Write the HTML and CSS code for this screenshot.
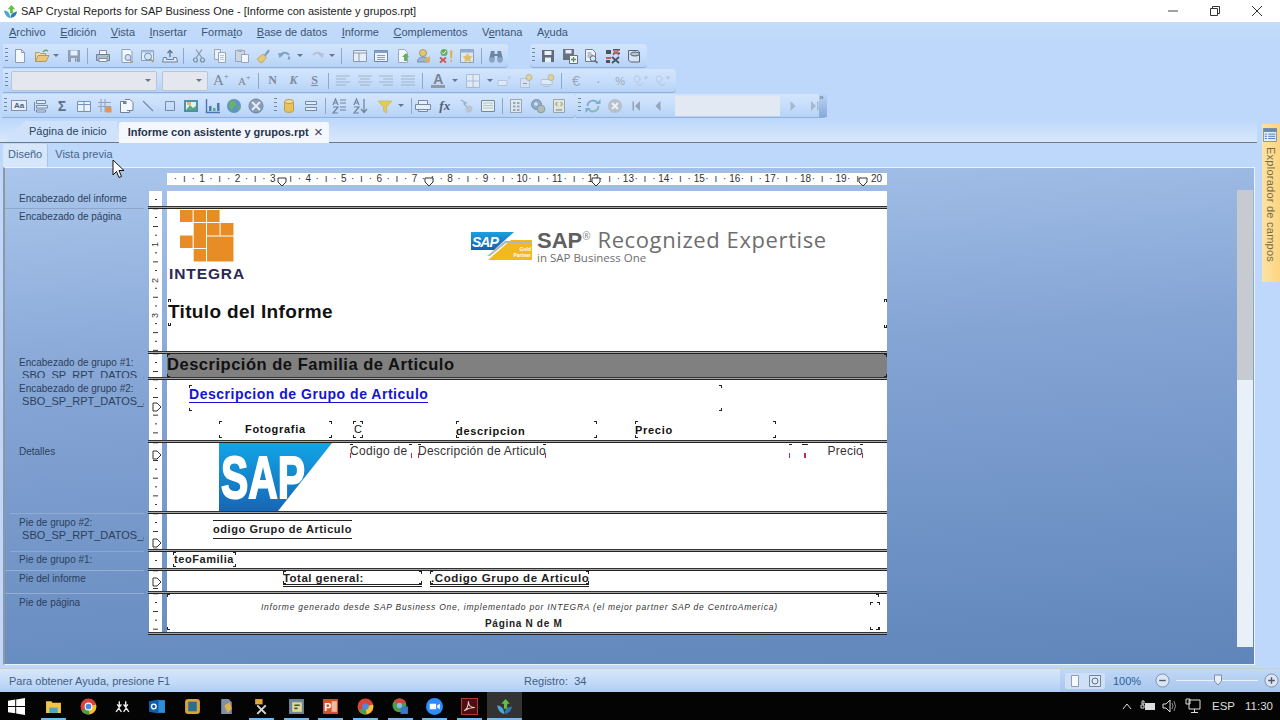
FILE: index.html
```html
<!DOCTYPE html>
<html>
<head>
    <title>SAP Crystal Reports for SAP Business One</title>
    <link rel="stylesheet" href="styles.css">
</head>
<body>
    <!-- icon set, all toolbar icons are drawn on a 16 box -->
    <svg class="defs" width="0" height="0">
        <symbol id="new" viewBox="0 0 16 16"><path d="M3.5 1.5h6l3 3v10h-9z" fill="#fff" stroke="#7f8fa8"/><path d="M9.5 1.5v3h3" fill="none" stroke="#7f8fa8"/></symbol>
        <symbol id="open" viewBox="0 0 16 16"><path d="M1.5 13.5v-9h4l1 1h5v2" fill="#f7dc96" stroke="#a98a45"/><path d="M1.5 13.5l2.5-6h11l-3 6z" fill="#f3c35a" stroke="#a98a45"/><path d="M9 4q2-3 5-1" fill="none" stroke="#5b8a3c" stroke-width="1.3"/></symbol>
        <symbol id="save" viewBox="0 0 16 16"><path d="M2 2h12v12H2z" fill="#7f8fa8"/><path d="M4.5 2.5h7v5h-7z" fill="#eef3fa"/><path d="M5 10h6v4H5z" fill="#d5dde9"/><path d="M9 10.5h1.500v3H9z" fill="#6b7a92"/></symbol>
        <symbol id="print" viewBox="0 0 16 16"><path d="M4.500 2.500h7v4h-7z" fill="#fff" stroke="#6f7c90"/><path d="M1.500 6.500h13v6h-13z" fill="#aab4c2" stroke="#5f6b7d"/><path d="M4 10.500h8v3H4z" fill="#fff" stroke="#6f7c90"/><path d="M11.500 8h2v1.500h-2z" fill="#6fae4f"/></symbol>
        <symbol id="pview" viewBox="0 0 16 16"><path d="M3 1.500h8l2 2v11H3z" fill="#fff" stroke="#7f8fa8"/><circle cx="9" cy="9.500" r="3" fill="#cfe3f7" stroke="#5f7b98"/><path d="M11 12l2.500 2.500" stroke="#b08a3a" stroke-width="1.500"/></symbol>
        <symbol id="pview2" viewBox="0 0 16 16"><path d="M1.500 2.500h12v10h-12z" fill="#eaf1fa" stroke="#7f8fa8"/><path d="M1.500 2.500h12v2h-12z" fill="#9db6d6"/><circle cx="8" cy="8.500" r="3.500" fill="#d6e8f9" stroke="#5f7b98"/><path d="M10.500 11l3 3" stroke="#b08a3a" stroke-width="1.500"/></symbol>
        <symbol id="export" viewBox="0 0 16 16"><path d="M1.500 9.500h3v2h7v-2h3l1 4.500h-15z" fill="#e6ebf2" stroke="#5f6b7d"/><path d="M8 9V3M5.500 5L8 2.500 10.500 5" fill="none" stroke="#4d5969" stroke-width="1.300"/></symbol>
        <symbol id="cut" viewBox="0 0 16 16"><path d="M5 10L11 1.500M11 10L5 1.500" stroke="#7a8492" stroke-width="1.200"/><circle cx="4.500" cy="12" r="2" fill="none" stroke="#6f7c90" stroke-width="1.200"/><circle cx="11.500" cy="12" r="2" fill="none" stroke="#6f7c90" stroke-width="1.200"/></symbol>
        <symbol id="copy" viewBox="0 0 16 16"><path d="M2.500 1.500h6v10h-6z" fill="#f4f6f9" stroke="#8e99a8"/><path d="M6.500 4.500h7v10h-7z" fill="#fff" stroke="#8e99a8"/><path d="M8 7.500h4M8 9.500h4M8 11.500h4" stroke="#b6bfcb"/></symbol>
        <symbol id="paste" viewBox="0 0 16 16"><path d="M1.500 2.500h9v11h-9z" fill="#cfd5dd" stroke="#8e99a8"/><path d="M4 1.500h4v2.500H4z" fill="#9aa5b3"/><path d="M7.500 6.500h7v8h-7z" fill="#fff" stroke="#8e99a8"/></symbol>
        <symbol id="brush" viewBox="0 0 16 16"><path d="M9 7l4-5.500 2 1.500-4.500 5.500z" fill="#6d8fb8"/><path d="M2 11l6-5 3.500 3.500-4.500 5.500C5 14 3 13 2 11z" fill="#efc456" stroke="#a98a45" stroke-width=".7"/></symbol>
        <symbol id="undo" viewBox="0 0 16 16"><path d="M3 8.500a5 5 0 0 1 9-1.500M12.500 8.500l-1 3" fill="none" stroke="#6f8fb8" stroke-width="2"/><path d="M1 5l6 1-4.500 4z" fill="#6f8fb8"/></symbol>
        <symbol id="redo" viewBox="0 0 16 16"><path d="M13 8.500a5 5 0 0 0-9-1.500" fill="none" stroke="#aebccd" stroke-width="2"/><path d="M15 5l-6 1 4.500 4z" fill="#aebccd"/></symbol>
        <symbol id="layout" viewBox="0 0 16 16"><path d="M1.500 2.500h13v11h-13z" fill="#eef3f9" stroke="#7f8b9b"/><path d="M1.500 5h13M7 5v8.500" stroke="#7f8b9b"/></symbol>
        <symbol id="form" viewBox="0 0 16 16"><path d="M1.500 2.500h13v11h-13z" fill="#f7fafd" stroke="#5f6f85"/><path d="M1.500 2.500h13v2.500h-13z" fill="#6f92bd"/><path d="M4 7.500h8M4 9.500h8M4 11.500h8" stroke="#7f8b9b"/></symbol>
        <symbol id="pgreen" viewBox="0 0 16 16"><path d="M3.500 1.500h6l3 3v10h-9z" fill="#fff" stroke="#8f9bab"/><path d="M7 9l4-4 3 4h-2v4H9V9z" fill="#4fa33a"/></symbol>
        <symbol id="people" viewBox="0 0 16 16"><circle cx="7" cy="5" r="3.500" fill="#e9c24f" stroke="#9a8a4a"/><path d="M1.500 14c0-4 3-5 6-5s5 2 5 5z" fill="#8fb0c9" stroke="#6f7c90"/><path d="M9 11l5-3v6h-5z" fill="#e3a33a"/></symbol>
        <symbol id="check" viewBox="0 0 16 16"><circle cx="6" cy="4.500" r="3.500" fill="#4fa33a"/><path d="M4 4.500l1.500 1.500 2.500-3" stroke="#fff" fill="none"/><path d="M2 9.500l6 5M8 9.500l-6 5" stroke="#cf3a2a" stroke-width="1.800"/><path d="M12 2.500h2.500l-.5 8h-1.500zM12.500 12h1.500v2h-1.500z" fill="#e8a21f"/></symbol>
        <symbol id="note" viewBox="0 0 16 16"><path d="M1.500 1.500h13v13h-13z" fill="#dfe9f5" stroke="#7f93ac"/><path d="M1.500 1.500h13v3h-13z" fill="#88a4c6"/><path d="M8.500 5l1.800 3 3.200.5-2.300 2.300.6 3.200-3.300-1.500-3 1.500.5-3.200L3.500 8.500 7 8z" fill="#eeb63a"/></symbol>
        <symbol id="binoc" viewBox="0 0 16 16"><path d="M3 3h3.500v3h3V3H13l2 9h-5.500V8h-3v4H1z" fill="#56708f"/><circle cx="4" cy="12" r="2.800" fill="#7d99ba"/><circle cx="12" cy="12" r="2.800" fill="#7d99ba"/></symbol>
        <symbol id="disk" viewBox="0 0 16 16"><path d="M2 2h12v12H2z" fill="#4a4f57"/><path d="M4.500 3h7v4h-7z" fill="#f3f5f8"/><path d="M5 9.500h6V14H5z" fill="#f3f5f8"/></symbol>
        <symbol id="diskplus" viewBox="0 0 16 16"><path d="M1 1h11v11H1z" fill="#525861"/><path d="M3.500 2h6v3.500h-6z" fill="#f3f5f8"/><path d="M7.500 7.500h8v8h-8z" fill="#fff" stroke="#525861"/><path d="M11.500 9v5M9 11.500h5" stroke="#3f7c3a" stroke-width="1.300"/></symbol>
        <symbol id="docmag" viewBox="0 0 16 16"><path d="M2.500 1.500h7l3 3v9h-10z" fill="#f7f8fa" stroke="#5f6670"/><path d="M4.500 5h4M4.500 7h5M4.500 9h3" stroke="#7b838e"/><circle cx="10" cy="10.500" r="2.800" fill="#dfeaf6" stroke="#434a54"/><path d="M12 12.500l2.500 2.500" stroke="#434a54" stroke-width="1.500"/></symbol>
        <symbol id="abc" viewBox="0 0 16 16"><path d="M1 2h5v4H1z" fill="#2b3240"/><path d="M8 1h7v1.500H8zM8 4.500h7V6H8z" fill="#2b3240"/><path d="M8 2l6 5M14 2l-6 5" stroke="#cf3a2a" stroke-width="1.400"/><path d="M7 9l7 6M14 9l-7 6" stroke="#2b3240" stroke-width="1.800"/><path d="M1 9h5v2H1z" fill="#cf3a2a"/><path d="M1 12h4v3H1z" fill="#2b3240"/></symbol>
        <symbol id="cyl" viewBox="0 0 16 16"><path d="M2.500 2.500h9l2 1.500v10h-9l-2-2z" fill="#dfe6ef" stroke="#3f4854"/><ellipse cx="9" cy="6" rx="4.500" ry="2" fill="#aebdcf" stroke="#3f4854"/></symbol>
        <symbol id="lines" viewBox="0 0 16 16"><path d="M3.500 2.500h9v3h-9zM3.500 7.500h11v2.500h-11zM3.500 12h9v2h-9z" fill="#eaf1fa" stroke="#63758c"/><path d="M1.500 4v9" stroke="#63758c"/></symbol>
        <symbol id="table" viewBox="0 0 16 16"><path d="M1.500 3.500h13v10h-13z" fill="#f3f7fc" stroke="#5f81aa"/><path d="M1.500 6.500h13M8 3.500v10" stroke="#5f81aa"/></symbol>
        <symbol id="cross" viewBox="0 0 16 16"><path d="M4 1v13M8 1v13M1 4.500h13M1 8.500h13" stroke="#8694a7"/><path d="M8.500 9h6v5.500h-6z" fill="#e8852e"/></symbol>
        <symbol id="sub" viewBox="0 0 16 16"><path d="M1.500 3.500h9v11h-9z" fill="#fff" stroke="#5f6b7d"/><path d="M6 1.500h5l3 3v8H8" fill="#fff" stroke="#5f6b7d"/><path d="M4 3h3.500v3H4z" fill="#5f6b7d"/></symbol>
        <symbol id="line" viewBox="0 0 16 16"><path d="M3 3l10 10" stroke="#68778b" stroke-width="1.200"/></symbol>
        <symbol id="box" viewBox="0 0 16 16"><path d="M3.500 3.500h9v9h-9z" fill="none" stroke="#68778b"/></symbol>
        <symbol id="pic" viewBox="0 0 16 16"><path d="M1 2h14v12H1z" fill="#2f7f93"/><path d="M3 4h10v8H3z" fill="#eaf6f8"/><path d="M3 12l4-5 3 3 3-2v4z" fill="#3f9f5f"/><path d="M4 4h4v3H4z" fill="#e8b23a"/></symbol>
        <symbol id="chart" viewBox="0 0 16 16"><path d="M1.500 1v13.500H15" fill="none" stroke="#2f5f9f" stroke-width="1.400"/><path d="M4 8h2.500v5H4z" fill="#2f5f9f"/><path d="M8 10h2.500v3H8z" fill="#3f9f5f"/><path d="M12 5h2.500v8H12z" fill="#2f5f9f"/></symbol>
        <symbol id="globe" viewBox="0 0 16 16"><circle cx="8" cy="8" r="7" fill="#3f85b8"/><path d="M4 2.500l5 1 1 4-3 2-1 4-3-5zM11 8l3 .5-1.500 4.500z" fill="#56a63f"/></symbol>
        <symbol id="ballx" viewBox="0 0 16 16"><circle cx="8" cy="8" r="7" fill="#7b8ea6" stroke="#5d7088"/><path d="M4 4l8 8M12 4l-8 8" stroke="#e9eff6" stroke-width="2.200"/></symbol>
        <symbol id="db" viewBox="0 0 16 16"><path d="M3.500 3.500v9c0 2.500 9 2.500 9 0v-9z" fill="#f0bd36" stroke="#b98b1f"/><ellipse cx="8" cy="3.500" rx="4.500" ry="2" fill="#f8dc80" stroke="#b98b1f"/></symbol>
        <symbol id="sect" viewBox="0 0 16 16"><path d="M2.500 3.500h11v3h-11zM2.500 9.500h11v3h-11z" fill="#eaf1fa" stroke="#63758c"/></symbol>
        <symbol id="sortaz" viewBox="0 0 16 16"><path d="M2 7l2.500-6L7 7M3 5h3M2 9h5l-5 6h5" fill="none" stroke="#5d7088" stroke-width="1.200"/><path d="M9 2h6M9 5h6M9 9h6M9 12h6" stroke="#5d7088"/></symbol>
        <symbol id="sortd" viewBox="0 0 16 16"><path d="M1 7l2.500-6L6 7M2 5h3M1 9h5l-5 6h5" fill="none" stroke="#5d7088" stroke-width="1.200"/><path d="M11 1v13M8 11l3 3.500 3-3.500" fill="none" stroke="#5d7088" stroke-width="1.300"/></symbol>
        <symbol id="funnel" viewBox="0 0 16 16"><path d="M1 3h14L9.500 9v6l-3-2V9z" fill="#ecc62f" stroke="#c9a422" stroke-width=".6"/></symbol>
        <symbol id="tray" viewBox="0 0 16 16"><path d="M3.500 2.500h9v4h-9zM.5 6.500h15v5h-15zM3.500 11.500h9v2h-9z" fill="#edf2f8" stroke="#63758c"/></symbol>
        <symbol id="ball" viewBox="0 0 16 16"><path d="M3 2l5 3-2 1 3 3" fill="none" stroke="#8f9fb2" stroke-width="1.300"/><circle cx="11" cy="11" r="3.500" fill="#b9bfc7"/></symbol>
        <symbol id="dots" viewBox="0 0 16 16"><path d="M1.500 2.500h13v11h-13z" fill="#eef4e8" stroke="#63758c"/><path d="M3.500 5h9M3.500 7.500h9M3.500 10h9" stroke="#6f8a9f" stroke-dasharray="1 1"/></symbol>
        <symbol id="tbl2" viewBox="0 0 16 16"><path d="M2.500 1.500h11v13h-11z" fill="#e8eaee" stroke="#8e98a5"/><path d="M5 4h2.500v2H5zM9 4h2.500v2H9zM5 7.500h2.500v2H5zM9 7.500h2.500v2H9zM5 11h2.500v2H5zM9 11h2.500v2H9z" fill="#8e98a5"/></symbol>
        <symbol id="gears" viewBox="0 0 16 16"><circle cx="6.500" cy="6.500" r="5" fill="#7fa1c5" stroke="#6b7f96"/><circle cx="11" cy="11" r="3.800" fill="#a9b7a8" stroke="#7d8a7c"/><circle cx="6" cy="6" r="1.800" fill="#dfe9f3"/></symbol>
        <symbol id="code" viewBox="0 0 16 16"><path d="M2.500 1.500h11v13h-11z" fill="#e7e9c8" stroke="#8e98a5"/><path d="M6.500 4L4.500 6l2 2M9.500 4l2 2-2 2" fill="none" stroke="#5d7088"/><path d="M5 11h6v2H5z" fill="#9aa6b4"/></symbol>
        <symbol id="refresh" viewBox="0 0 16 16"><path d="M2.500 8a5.500 5.500 0 0 1 10-3" fill="none" stroke="#6fa0c9" stroke-width="2"/><path d="M13.500 8a5.500 5.500 0 0 1-10 3" fill="none" stroke="#7fae9f" stroke-width="2"/><path d="M10.500 6h5V1zM5.500 10h-5v5z" fill="#6fa0c9"/></symbol>
        <symbol id="stop" viewBox="0 0 16 16"><circle cx="8" cy="8" r="7" fill="#b3b8be"/><path d="M5 5l6 6M11 5l-6 6" stroke="#f4f6f8" stroke-width="2.200"/></symbol>
        <symbol id="first" viewBox="0 0 16 16"><path d="M4.500 3.500h1.500v9H4.500zM12 3v10L7 8z" fill="#8a96a6"/></symbol>
        <symbol id="prev" viewBox="0 0 16 16"><path d="M10.500 3v10L5.500 8z" fill="#8a96a6"/></symbol>
        <symbol id="next" viewBox="0 0 16 16"><path d="M5.500 3v10l5-5z" fill="#9fb0c6"/></symbol>
        <symbol id="last" viewBox="0 0 16 16"><path d="M4 3v10l5-5zM10 3.500h1.500v9H10z" fill="#9fb0c6"/></symbol>
        <symbol id="al" viewBox="0 0 16 16"><path d="M1 3h14M1 6h10M1 9h14M1 12h10" stroke="#8d99a8" stroke-width="1.200"/></symbol>
        <symbol id="ac" viewBox="0 0 16 16"><path d="M1 3h14M3 6h10M1 9h14M3 12h10" stroke="#8d99a8" stroke-width="1.200"/></symbol>
        <symbol id="ar" viewBox="0 0 16 16"><path d="M1 3h14M5 6h10M1 9h14M5 12h10" stroke="#8d99a8" stroke-width="1.200"/></symbol>
        <symbol id="aj" viewBox="0 0 16 16"><path d="M1 3h14M1 6h14M1 9h14M1 12h14" stroke="#8d99a8" stroke-width="1.200"/></symbol>
        <symbol id="border" viewBox="0 0 16 16"><path d="M1.500 1.500h13v13h-13zM8 1.500v13M1.500 8h13" fill="#eef3f9" stroke="#9aa6b5"/></symbol>
        <symbol id="cellb" viewBox="0 0 16 16"><path d="M1 7.500h9v5H1z" fill="#eef3f9" stroke="#aab5c3"/><path d="M11 6l3-3M14 6l-3-3" stroke="#aab5c3"/></symbol>
        <symbol id="lock1" viewBox="0 0 16 16"><path d="M2.500 5.500h9v9h-9z" fill="#dfe6ef" stroke="#a8b3c1"/><path d="M5 10h4v1H5z" fill="#777"/><circle cx="11" cy="4.500" r="3" fill="#eec866" stroke="#b59a55"/></symbol>
        <symbol id="lock2" viewBox="0 0 16 16"><path d="M1 6.500h11v5H1zM3 13.500h7" fill="#eef3f9" stroke="#a8b3c1"/><circle cx="11" cy="4.500" r="3" fill="#eec866" stroke="#b59a55"/></symbol>
        <symbol id="pct1" viewBox="0 0 16 16"><path d="M3 3a3 3 0 1 0 .1 0M12 2.500v4M10 4.500h4" fill="none" stroke="#aab5c3"/><path d="M3 10l3 3 3-3" fill="none" stroke="#aab5c3"/></symbol>
        <symbol id="fields" viewBox="0 0 16 16"><path d="M.5 .5h15v15H.5z" fill="#e4eef9" stroke="#6a89ad"/><path d="M.5 .5h15v4H.5z" fill="#6a89ad"/><path d="M6 7h8M6 9.500h8M6 12h8" stroke="#3b74b5"/><path d="M2 7h2.500M2 9.500h2.500M2 12h2.500" stroke="#3b74b5"/></symbol>
        <symbol id="app" viewBox="0 0 16 16"><path d="M1 7c3 0 5 1.500 6 4l1 4c-4-.5-6-4-7-8z" fill="#4aa5d8"/><path d="M8 15c0-4 2-6 7-7-.5 4-3 6.500-7 7z" fill="#2f78b8"/><path d="M9 1l4 4.500h-2.500V10H7.500V5.500H5z" fill="#5fc13f"/></symbol>
        <symbol id="dn-chev" viewBox="0 0 10 8"><path d="M1 7l4-5 4 5" fill="none" stroke="#ddd"/></symbol>
    </svg>

    <div class="titlebar">
        <svg class="app-ic"><use href="#app"/></svg>
        <span class="app-title">SAP Crystal Reports for SAP Business One - [Informe con asistente y grupos.rpt]</span>
        <div class="win-btns">
            <svg class="win-b" viewBox="0 0 12 12"><path d="M1 6h10" stroke="#444"/></svg>
            <svg class="win-b" viewBox="0 0 12 12"><path d="M1.500 3.500h7v7h-7zM3.500 3.500v-2h7v7h-2" fill="none" stroke="#333"/></svg>
            <svg class="win-b" viewBox="0 0 12 12"><path d="M1 1l10 10M11 1L1 11" stroke="#333"/></svg>
        </div>
    </div>

    <nav class="menubar">
        <span><u>A</u>rchivo</span><span><u>E</u>dición</span><span><u>V</u>ista</span><span><u>I</u>nsertar</span><span>Forma<u>t</u>o</span><span><u>B</u>ase de datos</span><span><u>I</u>nforme</span><span><u>C</u>omplementos</span><span>V<u>e</u>ntana</span><span>A<u>y</u>uda</span>
    </nav>

    <div class="toolbars">
        <div class="tb-row">
            <div class="tb tb-1">
                <i class="grip"></i>
                <svg class="ic"><use href="#new"/></svg>
                <svg class="ic"><use href="#open"/></svg><b class="dd"></b>
                <svg class="ic"><use href="#save"/></svg><i class="sep"></i>
                <svg class="ic"><use href="#print"/></svg>
                <svg class="ic ic-w"><use href="#pview"/></svg>
                <svg class="ic"><use href="#pview2"/></svg>
                <svg class="ic"><use href="#export"/></svg><i class="sep"></i>
                <svg class="ic"><use href="#cut"/></svg>
                <svg class="ic"><use href="#copy"/></svg>
                <svg class="ic"><use href="#paste"/></svg>
                <svg class="ic"><use href="#brush"/></svg>
                <svg class="ic"><use href="#undo"/></svg><b class="dd"></b>
                <svg class="ic"><use href="#redo"/></svg><b class="dd"></b><i class="sep sep-w"></i>
                <svg class="ic"><use href="#layout"/></svg>
                <svg class="ic"><use href="#form"/></svg>
                <svg class="ic"><use href="#pgreen"/></svg>
                <svg class="ic"><use href="#people"/></svg>
                <svg class="ic"><use href="#check"/></svg>
                <svg class="ic"><use href="#note"/></svg><i class="sep sep-n"></i>
                <svg class="ic"><use href="#binoc"/></svg>
            </div>
            <div class="tb tb-2">
                <i class="grip"></i>
                <svg class="ic"><use href="#disk"/></svg>
                <svg class="ic"><use href="#diskplus"/></svg>
                <svg class="ic"><use href="#docmag"/></svg>
                <svg class="ic"><use href="#abc"/></svg>
                <svg class="ic"><use href="#cyl"/></svg>
            </div>
        </div>
        <div class="tb-row">
            <div class="tb tb-3">
                <i class="grip"></i>
                <span class="combo combo-font"><b class="dd"></b></span>
                <span class="combo combo-size"><b class="dd"></b></span>
                <span class="tg tg-a">A<sup>+</sup></span>
                <span class="tg tg-a tg-a2">A<sup>+</sup></span><i class="sep sep-n"></i>
                <span class="tg tg-n">N</span><span class="tg tg-k">K</span><span class="tg tg-s">S</span><i class="sep"></i>
                <svg class="ic ic-off"><use href="#al"/></svg>
                <svg class="ic ic-off"><use href="#ac"/></svg>
                <svg class="ic ic-off"><use href="#ar"/></svg>
                <svg class="ic ic-off"><use href="#aj"/></svg><i class="sep sep-n"></i>
                <span class="tg tg-acol"><span>A</span></span><b class="dd"></b>
                <svg class="ic ic-off"><use href="#border"/></svg><b class="dd"></b>
                <svg class="ic ic-off ic-tight"><use href="#cellb"/></svg>
                <svg class="ic ic-off"><use href="#lock1"/></svg>
                <svg class="ic ic-off"><use href="#lock2"/></svg><i class="sep sep-n"></i>
                <span class="tg tg-e">€</span><span class="tg tg-e">·</span><span class="tg tg-p">%</span>
                <svg class="ic ic-off"><use href="#pct1"/></svg>
                <svg class="ic ic-off"><use href="#pct1"/></svg>
            </div>
        </div>
        <div class="tb-row">
            <div class="tb tb-4">
                <i class="grip"></i>
                <span class="tg tg-aa">Aa</span>
                <svg class="ic"><use href="#lines"/></svg>
                <span class="tg tg-sum">Σ</span>
                <svg class="ic"><use href="#table"/></svg>
                <svg class="ic"><use href="#cross"/></svg>
                <svg class="ic"><use href="#sub"/></svg>
                <svg class="ic"><use href="#line"/></svg>
                <svg class="ic"><use href="#box"/></svg>
                <svg class="ic"><use href="#pic"/></svg>
                <svg class="ic"><use href="#chart"/></svg>
                <svg class="ic"><use href="#globe"/></svg>
                <svg class="ic"><use href="#ballx"/></svg>
                <i class="grip grip-m"></i>
                <svg class="ic"><use href="#db"/></svg>
                <svg class="ic"><use href="#sect"/></svg><i class="sep sep-n"></i>
                <svg class="ic"><use href="#sortaz"/></svg>
                <svg class="ic"><use href="#sortd"/></svg>
                <svg class="ic ic-w"><use href="#funnel"/></svg><b class="dd"></b><i class="sep sep-n"></i>
                <svg class="ic ic-tight"><use href="#tray"/></svg>
                <span class="tg tg-fx">fx</span>
                <svg class="ic"><use href="#ball"/></svg>
                <svg class="ic"><use href="#dots"/></svg><i class="sep sep-n"></i>
                <svg class="ic"><use href="#tbl2"/></svg>
                <svg class="ic"><use href="#gears"/></svg>
                <svg class="ic"><use href="#code"/></svg>
            </div>
            <div class="tb tb-5">
                <i class="grip"></i>
                <svg class="ic"><use href="#refresh"/></svg>
                <svg class="ic"><use href="#stop"/></svg>
                <svg class="ic"><use href="#first"/></svg>
                <svg class="ic"><use href="#prev"/></svg>
                <span class="page-box"></span>
                <svg class="ic"><use href="#next"/></svg>
                <svg class="ic"><use href="#last"/></svg>
                <span class="tb-more">»</span>
            </div>
        </div>
    </div>

    <div class="workspace">
        <div class="doc">
            <div class="doc-tabs">
                <span class="doc-tab">Página de inicio</span>
                <span class="doc-tab doc-tab-on">Informe con asistente y grupos.rpt<em>×</em></span>
            </div>
            <div class="view-tabs">
                <span class="view-tab view-tab-on">Diseño</span>
                <span class="view-tab">Vista previa</span>
            </div>
            <div class="panel">
                <div class="report">
                    <div class="hruler">
                        <span><i>·</i><i>ı</i><i>·</i><i>1</i></span><span><i>·</i><i>ı</i><i>·</i><i>2</i></span><span><i>·</i><i>ı</i><i>·</i><i>3</i></span><span><i>·</i><i>ı</i><i>·</i><i>4</i></span><span><i>·</i><i>ı</i><i>·</i><i>5</i></span><span><i>·</i><i>ı</i><i>·</i><i>6</i></span><span><i>·</i><i>ı</i><i>·</i><i>7</i></span><span><i>·</i><i>ı</i><i>·</i><i>8</i></span><span><i>·</i><i>ı</i><i>·</i><i>9</i></span><span><i>·</i><i>ı</i><i>·</i><i>10</i></span><span><i>·</i><i>ı</i><i>·</i><i>11</i></span><span><i>·</i><i>ı</i><i>·</i><i>12</i></span><span><i>·</i><i>ı</i><i>·</i><i>13</i></span><span><i>·</i><i>ı</i><i>·</i><i>14</i></span><span><i>·</i><i>ı</i><i>·</i><i>15</i></span><span><i>·</i><i>ı</i><i>·</i><i>16</i></span><span><i>·</i><i>ı</i><i>·</i><i>17</i></span><span><i>·</i><i>ı</i><i>·</i><i>18</i></span><span><i>·</i><i>ı</i><i>·</i><i>19</i></span><span><i>·</i><i>ı</i><i>·</i><i>20</i></span>
                        <!-- guide markers on the ruler -->
                        <svg class="guide g1" viewBox="0 0 10 10"><path d="M1 1h8v4L5 9 1 5z" fill="#fff" stroke="#333"/></svg>
                        <svg class="guide g2" viewBox="0 0 10 10"><path d="M1 1h8v4L5 9 1 5z" fill="#fff" stroke="#333"/></svg>
                        <svg class="guide g3" viewBox="0 0 10 10"><path d="M1 1h8v4L5 9 1 5z" fill="#fff" stroke="#333"/></svg>
                        <svg class="guide g4" viewBox="0 0 10 10"><path d="M1 1h8v4L5 9 1 5z" fill="#fff" stroke="#333"/></svg>
                    </div>

                    <section class="band">
                        <div class="label label-t2 label-line">Encabezado del informe</div>
                        <div class="paper"><div class="vruler h15"></div><div class="body h15"></div></div>
                    </section>

                    <section class="band">
                        <div class="label label-t2">Encabezado de página</div>
                        <div class="paper">
                            <div class="vruler h142"><span class="vn n1">1</span><span class="vn n2">2</span><span class="vn n3">3</span></div>
                            <div class="body h142">
                                <svg class="tiles" viewBox="0 0 54 52">
                                    <g fill="#e88d26">
                                        <rect x="0" y="0" width="12.600" height="12"/><rect x="13.700" y="0" width="12.300" height="12"/><rect x="27" y="0" width="12.600" height="12"/>
                                        <rect x="0" y="25.500" width="12.600" height="12.500"/><rect x="13.700" y="13" width="12.300" height="25"/>
                                        <rect x="27" y="13" width="12.600" height="12.500"/><rect x="40.600" y="13" width="12.900" height="12.500"/>
                                        <rect x="27" y="26.500" width="26.500" height="25"/><rect x="13.700" y="39" width="12.300" height="12.500"/>
                                    </g>
                                </svg>
                                <span class="integra">INTEGRA</span>
                                <svg class="sap-small" viewBox="0 0 62 30">
                                    <defs><linearGradient id="sb" x1="0" y1="0" x2="0" y2="1"><stop offset="0" stop-color="#19a0e0"/><stop offset="1" stop-color="#155fae"/></linearGradient></defs>
                                    <path d="M17 28L40 8h21v20z" fill="#f1b91e"/>
                                    <path d="M19 24L35 11h26v-2H34L16 24z" fill="#b3b5b8"/>
                                    <path d="M0 0h43L23 18H0z" fill="url(#sb)"/>
                                    <text x="1" y="14.500" class="sap-s">SAP</text>
                                    <text x="60" y="19" class="gold">Gold</text>
                                    <text x="60" y="25" class="gold">Partner</text>
                                </svg>
                                <div class="expertise">
                                    <span class="exp-l1"><b>SAP</b><sup>®</sup> Recognized Expertise</span>
                                    <span class="exp-l2">in SAP Business One</span>
                                </div>
                                <i class="marks m-title"></i>
                                <div class="f f-title">Titulo del Informe</div>
                                <i class="marks m-title-r"></i>
                            </div>
                        </div>
                    </section>

                    <section class="band">
                        <div class="label label-clip">Encabezado de grupo #1:<br><span class="label-2">&nbsp;SBO_SP_RPT_DATOS_AF</span></div>
                        <div class="paper"><div class="vruler h23"></div><div class="body body-gray h23"><div class="f f-fam">Descripción de Familia de Articulo</div><i class="marks m-gray"></i></div></div>
                    </section>

                    <section class="band">
                        <div class="label">Encabezado de grupo #2:<br><span class="label-2">&nbsp;SBO_SP_RPT_DATOS_AF</span></div>
                        <div class="paper">
                            <div class="vruler h60"><svg class="vguide v1" viewBox="0 0 10 10"><path d="M1 1h4l4 4-4 4H1z" fill="#fff" stroke="#333"/></svg></div>
                            <div class="body h60">
                                <div class="f f-grp">Descripcion de Grupo de Articulo</div>
                                <i class="marks m-grp"></i>
                                <div class="f f-h-foto sel">Fotografia</div>
                                <div class="f f-h-c sel">C</div>
                                <div class="f f-h-desc sel">descripcion</div>
                                <div class="f f-h-prec sel">Precio</div>
                            </div>
                        </div>
                    </section>

                    <section class="band">
                        <div class="label label-box">Detalles</div>
                        <div class="paper">
                            <div class="vruler h68"><svg class="vguide v2" viewBox="0 0 10 10"><path d="M1 1h4l4 4-4 4H1z" fill="#fff" stroke="#333"/></svg></div>
                            <div class="body h68">
                                <svg class="sap-big" viewBox="0 0 113 68">
                                    <defs><linearGradient id="sg" x1="0" y1="0" x2="0" y2="1"><stop offset="0" stop-color="#12a5e6"/><stop offset="1" stop-color="#1666b6"/></linearGradient></defs>
                                    <path d="M0 0h113L59 68H0z" fill="url(#sg)"/>
                                    <text x="2" y="55" class="sap-b" textLength="84" lengthAdjust="spacingAndGlyphs">SAP</text>
                                </svg>
                                <div class="f f-d-cod sel-r">Codigo de</div>
                                <div class="f f-d-des sel-r">Descripción de Articulo</div>
                                <i class="marks-r m-d1"></i>
                                <div class="f f-d-pre sel-r">Precio</div>
                            </div>
                        </div>
                    </section>

                    <section class="band">
                        <div class="label label-box">Pie de grupo #2:<br><span class="label-2">&nbsp;SBO_SP_RPT_DATOS_AF</span></div>
                        <div class="paper">
                            <div class="vruler h35"><svg class="vguide v3" viewBox="0 0 10 10"><path d="M1 1h4l4 4-4 4H1z" fill="#fff" stroke="#333"/></svg></div>
                            <div class="body h35"><div class="f f-pg2"><span>Codigo Grupo de Articulo</span></div></div>
                        </div>
                    </section>

                    <section class="band">
                        <div class="label label-t2 label-line2">Pie de grupo #1:</div>
                        <div class="paper"><div class="vruler h16"></div><div class="body h16"><div class="f f-pg1 sel">teoFamilia</div></div></div>
                    </section>

                    <section class="band">
                        <div class="label label-t2 label-line2">Pie del informe</div>
                        <div class="paper">
                            <div class="vruler h20"><svg class="vguide v4" viewBox="0 0 10 10"><path d="M1 1h4l4 4-4 4H1z" fill="#fff" stroke="#333"/></svg></div>
                            <div class="body h20">
                                <div class="f f-tot sel">Total general:</div>
                                <div class="f f-totc sel">.Codigo Grupo de Articulo</div>
                            </div>
                        </div>
                    </section>

                    <section class="band">
                        <div class="label">Pie de página</div>
                        <div class="paper">
                            <div class="vruler h38"></div>
                            <div class="body h38">
                                <i class="marks m-foot"></i>
                                <div class="f f-foot">Informe generado desde SAP Business One, implementado por INTEGRA (el mejor partner SAP de CentroAmerica)</div>
                                <div class="f f-page">Página N de M</div>
                                <i class="marks m-foot2"></i>
                            </div>
                        </div>
                    </section>
                </div>
                <div class="vscroll"><div class="vthumb"></div></div>
            </div>
        </div>
        <aside class="dock">
            <div class="dock-tab">
                <svg class="dock-ic"><use href="#fields"/></svg>
                <span>Explorador de campos</span>
            </div>
        </aside>
    </div>

    <footer class="statusbar">
        <span class="st-help">Para obtener Ayuda, presione F1</span>
        <span class="st-rec">Registro: &nbsp;34</span>
        <div class="st-zoom">
            <span class="st-btns">
                <svg class="st-ic" viewBox="0 0 14 14"><path d="M3.500 1.500h7v11h-7z" fill="#f5f8fc" stroke="#8aa0bb"/></svg>
                <svg class="st-ic" viewBox="0 0 14 14"><path d="M1.500 1.500h11v11h-11z" fill="#dfe9f5" stroke="#6f86a3"/><circle cx="7" cy="7" r="3" fill="none" stroke="#5b6e86"/></svg>
            </span>
            <span class="st-pct">100%</span>
            <svg class="st-round" viewBox="0 0 16 16"><circle cx="8" cy="8" r="7" fill="#dbe6f4" stroke="#7c8fa8"/><path d="M4.500 8h7" stroke="#556" stroke-width="1.500"/></svg>
            <span class="slider"><svg class="slider-thumb" viewBox="0 0 10 12"><path d="M1.500 1h7v6L5 11 1.500 7z" fill="#e9eff7" stroke="#7c8fa8"/></svg></span>
            <svg class="st-round" viewBox="0 0 16 16"><circle cx="8" cy="8" r="7" fill="#dbe6f4" stroke="#7c8fa8"/><path d="M4.500 8h7M8 4.500v7" stroke="#556" stroke-width="1.500"/></svg>
        </div>
    </footer>

    <div class="taskbar">
        <svg class="tk tk-start" viewBox="0 0 16 16"><path d="M0 2.500l6.800-1v6H0zM7.700 1.400L16 0v7.500H7.700zM0 8.400h6.800v6l-6.800-1zM7.700 8.400H16V16l-8.300-1.300z" fill="#fff"/></svg>
        <span class="tk-s tk-run"><svg class="tk" viewBox="0 0 16 16"><path d="M1 3h5l1 1.500h8V14H1z" fill="#f4c545"/><path d="M4 9h8v5H4z" fill="#4fa6c4"/></svg></span>
        <span class="tk-s"><svg class="tk" viewBox="0 0 16 16"><circle cx="8" cy="8" r="7.500" fill="#d9443a"/><path d="M8 8L1.500 12A7.500 7.500 0 0 0 9 15.500z" fill="#4a9e4a"/><path d="M8 8l7-2a7.500 7.500 0 0 1-6 9.500z" fill="#f2c230"/><circle cx="8" cy="8" r="3.200" fill="#4b8bdc" stroke="#fff"/></svg></span>
        <span class="tk-s"><svg class="tk" viewBox="0 0 16 16"><path d="M5 3v5M3 6l2 2.500L7 6M11 3v5M9 6l2 2.500L13 6M2 13l2.500-3.500L7 13M9 13l2.500-3.500L14 13" fill="none" stroke="#eee" stroke-width="1.300"/></svg></span>
        <span class="tk-s"><svg class="tk" viewBox="0 0 16 16"><path d="M6 2h9v12H6z" fill="#2f8fd8"/><path d="M0 3l9-1.500v13L0 13z" fill="#0d5fae"/><circle cx="4.500" cy="8" r="2.200" fill="none" stroke="#fff" stroke-width="1.300"/></svg></span>
        <span class="tk-s"><svg class="tk" viewBox="0 0 16 16"><rect x="1" y="1" width="14" height="14" rx="3" fill="#d6a43a"/><rect x="4" y="3.500" width="8" height="9" fill="#2a6f8f"/></svg></span>
        <span class="tk-s"><svg class="tk" viewBox="0 0 16 16"><path d="M3 1h7l3 3v11H3z" fill="#7e8fa6"/><path d="M6 7l5-3 2 6-4 4z" fill="#e0b24a"/></svg></span>
        <span class="tk-s tk-run"><svg class="tk" viewBox="0 0 16 16"><path d="M2 1h7v5H2z" fill="#e0a93a"/><path d="M4 7l8 8M12 7l-8 8" stroke="#d5d8dc" stroke-width="1.800"/></svg></span>
        <span class="tk-s tk-run"><svg class="tk" viewBox="0 0 16 16"><path d="M1 1h14v14H1z" fill="#6f8aa0"/><path d="M4 4h9v9H4z" fill="#e4d98a"/><path d="M6 6h5v1.500H6zM6 9h3v1.500H6z" fill="#355"/></svg></span>
        <span class="tk-s tk-run"><svg class="tk" viewBox="0 0 16 16"><path d="M1 1h14v14H1z" fill="#d9502f"/><path d="M9 3h5v10H9z" fill="#f1b9a5"/><text x="2" y="12" class="tk-p">P</text></svg></span>
        <span class="tk-s tk-run"><svg class="tk" viewBox="0 0 16 16"><circle cx="8" cy="8" r="7.500" fill="#d9443a"/><path d="M8 8L1.500 12A7.500 7.500 0 0 0 9 15.500z" fill="#4a9e4a"/><path d="M8 8l7-2a7.500 7.500 0 0 1-6 9.500z" fill="#f2c230"/><circle cx="8" cy="8" r="3" fill="#4b8bdc"/></svg></span>
        <span class="tk-s tk-run"><svg class="tk" viewBox="0 0 16 16"><circle cx="7" cy="7" r="6.500" fill="#4a9e4a"/><path d="M7 7l6-3a6.500 6.500 0 0 0-11-1z" fill="#d9443a"/><path d="M8 8h7v7H8z" fill="#3b78c9"/><circle cx="7" cy="7" r="2.500" fill="#8bb8ea"/></svg></span>
        <span class="tk-s tk-run"><svg class="tk" viewBox="0 0 16 16"><circle cx="8" cy="8" r="8" fill="#2d8cff"/><path d="M3.500 5.500h6v5h-6zM10.500 7l2.500-1.500v5L10.500 9z" fill="#fff"/></svg></span>
        <span class="tk-s tk-run"><svg class="tk" viewBox="0 0 16 16"><path d="M.5 .5h15v15H.5z" fill="#4a1010" stroke="#b23a32"/><path d="M3 12c3-2 4-5 4-9 0 4 2 6 6 6-4 0-7 1-10 3z" fill="none" stroke="#f0c6c0"/></svg></span>
        <span class="tk-s tk-run tk-act"><svg class="tk" viewBox="0 0 16 16"><use href="#app"/></svg></span>
        <div class="tray">
            <svg class="tr-chev" viewBox="0 0 10 8"><use href="#dn-chev"/></svg>
            <svg class="tr" viewBox="0 0 16 16"><path d="M5 5h10v7H5z" fill="#ddd"/><path d="M1 7h3v3H1zM2 3h2v3H2z" fill="none" stroke="#ddd"/></svg>
            <svg class="tr" viewBox="0 0 16 16"><path d="M2 6h3l4-4v12l-4-4H2z" fill="none" stroke="#ddd"/><path d="M11 5q2 3 0 6M13 3q3 5 0 10" fill="none" stroke="#888"/></svg>
            <svg class="tr tr-net" viewBox="0 0 16 16"><path d="M4 2h11v9H4zM1 1h4v5H1zM9.500 11v3M6 14.500h7" fill="none" stroke="#ddd"/></svg>
            <span class="tr-lang">ESP</span>
            <span class="tr-time">11:30</span>
        </div>
    </div>

    <svg class="cursor" viewBox="0 0 13 19"><path d="M1 1v15l3.500-3.500 2.500 6 2.500-1-2.500-6h5z" fill="#fff" stroke="#111"/></svg>
</body>
</html>
```

FILE: styles.css
```css
:root {
    --ui: "Liberation Sans", sans-serif;
    --rep: "Liberation Sans", sans-serif;
    --sky: #bdd8fb;
    --ink: #3b5674;
}

* {
    box-sizing: border-box;
}

body {
    margin: 0;
    width: 1280px;
    height: 720px;
    overflow: hidden;
    position: relative;
    display: flex;
    flex-direction: column;
    font-family: var(--ui);
    background-color: var(--sky);
}

.defs {
    position: absolute;
}

/* title + menu */
.titlebar {
    height: 22px;
    flex: none;
    display: flex;
    align-items: center;
    background-color: #fff;
    padding-left: 3px;
}

.app-ic {
    width: 15px;
    height: 15px;
}

.app-title {
    margin-left: 3px;
    font-size: 11px;
    color: #222;
    white-space: nowrap;
}

.win-btns {
    margin-left: auto;
    display: flex;
    gap: 30px;
    padding-right: 17px;
}

.win-b {
    width: 12px;
    height: 12px;
}

.menubar {
    height: 22px;
    flex: none;
    display: flex;
    align-items: center;
    gap: 14.500px;
    padding: 0 0 2px 9px;
    font-size: 11px;
    color: var(--ink);
    background: linear-gradient(#c4dcfb, #bdd8fb);
}

.menubar u {
    text-underline-offset: 1px;
}

/* toolbars */
.toolbars {
    flex: none;
    display: flex;
    flex-direction: column;
}

.tb-row {
    height: 25px;
    display: flex;
}

.tb {
    height: 24px;
    display: flex;
    align-items: center;
    background: linear-gradient(#d3e5fc, #c4dcfb 60%, #b6d2f6);
    border-bottom: 1px solid #8fb0dc;
    border-radius: 0 4px 4px 0;
    padding-left: 2px;
}

.tb-1 { width: 505px; margin-left: 3px; }
.tb-2 { width: 117px; margin-left: 22px; border-radius: 4px; }
.tb-3 { width: 673px; margin-left: 3px; }
.tb-4 { width: 574px; margin-left: 2px; }
.tb-5 { width: 251px; }

.grip {
    width: 3px;
    height: 16px;
    flex: none;
    background: repeating-linear-gradient(#6f88a8 0 1px, transparent 1px 4px);
}

.grip-m {
    margin-left: 8px;
}

.ic {
    width: 16px;
    height: 16px;
    flex: none;
    margin: 0 2.750px;
    opacity: .8;
}

.tb > .grip + .ic,
.tb > .grip + .tg {
    margin-left: 4px;
}

.tb-2 > .grip + .ic {
    margin-left: 5px;
}

.ic-off {
    opacity: .6;
}

.ic-w {
    margin-left: 5px;
}

.ic-tight {
    margin-left: 0;
}

.dd {
    width: 0;
    height: 0;
    margin: 0 4px 0 1px;
    flex: none;
    border: 3px solid transparent;
    border-top: 3px solid #66778c;
    border-bottom: 0;
}

.tb-3 > .dd,
.tb-4 > .dd {
    margin-left: 3px;
}

.sep {
    width: 1px;
    height: 16px;
    flex: none;
    margin: 0 4px 0 2.500px;
    background-color: #8fa8c8;
}

.sep-n {
    margin: 0 3px;
}

.sep-w {
    margin: 0 7px 0 2px;
}

.combo {
    height: 20px;
    flex: none;
    display: flex;
    align-items: center;
    justify-content: flex-end;
    padding-right: 3px;
    background-color: #e4e8ee;
    border: 1px solid #b7c5d8;
    border-radius: 2px;
    margin-right: 5px;
}

.combo .dd {
    margin: 0 2px 0 0;
}

.combo-font { width: 146px; margin-left: 3px; }
.combo-size { width: 46px; }

.tg {
    width: 22px;
    flex: none;
    text-align: center;
    font: bold 12px "Liberation Serif", serif;
    color: #7e8a9b;
}

.tg-n, .tg-k, .tg-s { width: 21px; }
.tg-k { font-style: italic; }
.tg-s { text-decoration: underline; }
.tg-e { font: 15px var(--rep); color: #9aa8ba; }
.tg-p { font: 11px var(--rep); color: #9aa8ba; }
.tg-sum { font: bold 14px var(--rep); color: #5d7088; width: 21.500px; }
.tg-fx { font: italic bold 13px "Liberation Serif", serif; color: #4f5f73; width: 21.500px; }

.tg-a {
    width: 21.500px;
    margin-left: -3px;
    font: 15px "Liberation Serif", serif;
    color: #7a8491;
}

.tg-a sup {
    font-size: 8px;
    line-height: 0;
}

.tg-a2 {
    margin-left: 2px;
    font-size: 11px;
}

.tg-aa {
    width: 16px;
    height: 11px;
    margin-right: 2.750px;
    font: bold 8px/10px var(--rep);
    color: #4b6684;
    background-color: #e8eff8;
    border: 1px solid #7f93ac;
}

.tg-acol {
    width: 21.500px;
    margin-left: 2px;
    font: bold 14px/12px var(--rep);
    color: #7a8491;
}

.tg-acol span {
    display: inline-block;
    width: 14px;
    border-bottom: 3px solid #8d99a8;
}

.page-box {
    width: 105px;
    height: 20px;
    flex: none;
    margin: 0 2px 0 7px;
    background-color: #e2e9f3;
}

.tb-more {
    margin-left: -6px;
    width: 8px;
    height: 23px;
    font-size: 8px;
    line-height: 8px;
    color: #5d7088;
    background: linear-gradient(#bcd4f5, #89a9d6);
}

/* document area */
.workspace {
    flex: 1;
    min-height: 0;
    display: flex;
}

.doc {
    width: 1257px;
    display: flex;
    flex-direction: column;
}

.doc-tabs {
    height: 24px;
    flex: none;
    display: flex;
    align-items: flex-end;
    padding-left: 5px;
    background: linear-gradient(#bdd8fb, #d9e8fc);
    border-bottom: 1px solid #6f7a88;
    font-size: 11px;
    color: #2c4460;
}

.doc-tab {
    height: 21px;
    line-height: 20px;
    white-space: nowrap;
    padding: 0 10px 0 24px;
    background-color: #cfe2fb;
    clip-path: polygon(20px 0, 100% 0, 100% 100%, 0 100%);
}

.doc-tab-on {
    margin-left: 2px;
    padding: 0 6px 0 9px;
    background-color: #f4f8fe;
    clip-path: none;
    font-weight: 700;
    color: #26344a;
    border-radius: 3px 3px 0 0;
    margin-bottom: -1px;
    width: 210px;
    display: flex;
    justify-content: space-between;
}

.doc-tab-on em {
    font-style: normal;
    font-weight: 400;
    font-size: 15px;
    color: #445;
}

.view-tabs {
    height: 24px;
    flex: none;
    display: flex;
    padding-left: 4px;
    font-size: 11px;
    color: #47658a;
    background-color: var(--sky);
}

.view-tab {
    line-height: 22px;
    margin-left: 6px;
}

.view-tab-on {
    margin: 1px 1px 0 -1px;
    padding: 0 5px;
    line-height: 20px;
    background-color: #d6e6fb;
    border-right: 1px solid #a9c3e6;
    border-radius: 2px 2px 0 0;
}

.panel {
    flex: 1;
    min-height: 0;
    margin: 0 2px 3px 3px;
    display: flex;
    border: 1px solid #eaf3ff;
    border-left-color: #8f97a3;
    border-left-width: 2px;
    background: linear-gradient(176deg, #aac6ec 0, #84a4d4 40%, #5f85ba 100%);
    color: #2d4260;
}

.report {
    width: 884px;
    padding-top: 5px;
}

.hruler {
    position: relative;
    height: 12px;
    margin: 0 0 6px 162px;
    width: 720px;
    padding-left: 4px;
    display: flex;
    background-color: #fff;
    font: 10px/12px var(--rep);
    color: #333;
}

.hruler span {
    width: 35.450px;
    flex: none;
    display: grid;
    grid-template-columns: repeat(4, 8.860px);
}

.hruler i {
    font-style: normal;
    text-align: center;
    white-space: nowrap;
}

.guide {
    position: absolute;
    top: 4px;
    width: 10px;
    height: 10px;
}

.g1 { left: 110px; }
.g2 { left: 257px; }
.g3 { left: 424px; }
.g4 { left: 691px; }

.band {
    display: flex;
}

.label {
    width: 139px;
    margin-right: 4px;
    flex: none;
    padding: 3px 0 0 14px;
    font-size: 10px;
    line-height: 12px;
    color: #2c3f5b;
    overflow: hidden;
    white-space: nowrap;
}

.label-2 {
    font-size: 11px;
}

.label-t2 {
    padding-top: 2px;
}

.label-clip {
    height: 24px;
}

.label-line {
    border-bottom: 1px solid #8ea6c7;
}

.label-box {
    margin-left: 5px;
    padding-left: 9px;
    width: 134px;
    border-bottom: 1px solid rgba(255, 255, 255, .18);
}

.label-line2 {
    border-bottom: 1px solid rgba(255, 255, 255, .25);
}

.paper {
    width: 739px;
    height: max-content;
    display: grid;
    grid-template-columns: 14px 720px;
    column-gap: 5px;
}

.paper::after {
    content: "";
    grid-column: 1 / -1;
    height: 3px;
    background: linear-gradient(#333 33%, #a6a6a6 33% 66%, #222 66%);
}

/* dot and dash every 8.85px, same rhythm as the top ruler */
.vruler {
    position: relative;
    margin-left: 1px;
    background-color: #fff;
    background-image:
        linear-gradient(#333 1px, transparent 1px),
        linear-gradient(#333 1px, transparent 1px);
    background-size: 2px 17.700px, 5px 17.700px;
    background-position: 5.500px 8px, 4px 17px;
    background-repeat: repeat-y;
}

.vn {
    position: absolute;
    left: 3px;
    width: 7px;
    text-align: center;
    font: 9px/9px var(--rep);
    color: #333;
    background-color: #fff;
    transform: rotate(-90deg);
}

.n1 { top: 31px; }
.n2 { top: 67px; }
.n3 { top: 102px; }

.vguide {
    position: absolute;
    left: 3px;
    width: 10px;
    height: 10px;
}

.v1 { top: 22px; }
.v2 { top: 7px; }
.v3 { top: 24px; }
.v4 { top: 6px; }

.body {
    position: relative;
    background-color: #fff;
    overflow: hidden;
}

.body-gray {
    background-color: #808080;
}

.h15 { height: 15px; }
.h142 { height: 142px; }
.h23 { height: 23px; }
.h60 { height: 60px; }
.h68 { height: 68px; }
.h35 { height: 35px; }
.h16 { height: 16px; }
.h20 { height: 20px; }
.h38 { height: 38px; }

/* report designer canvas, everything below sits at its own place on the page */
.f {
    position: absolute;
    font-family: var(--rep);
    color: #111;
    white-space: nowrap;
}

.sel, .marks {
    background:
        linear-gradient(#222, #222) 0 0 / 3px 1px no-repeat,
        linear-gradient(#222, #222) 0 0 / 1px 3px no-repeat,
        linear-gradient(#222, #222) 100% 0 / 3px 1px no-repeat,
        linear-gradient(#222, #222) 100% 0 / 1px 3px no-repeat,
        linear-gradient(#222, #222) 0 100% / 3px 1px no-repeat,
        linear-gradient(#222, #222) 0 100% / 1px 3px no-repeat,
        linear-gradient(#222, #222) 100% 100% / 3px 1px no-repeat,
        linear-gradient(#222, #222) 100% 100% / 1px 3px no-repeat;
}

.sel-r, .marks-r {
    background:
        linear-gradient(#222, #222) 0 0 / 3px 1px no-repeat,
        linear-gradient(#c0304a, #c0304a) 0 100% / 1px 5px no-repeat,
        linear-gradient(#222, #222) 100% 0 / 3px 1px no-repeat,
        linear-gradient(#c0304a, #c0304a) 100% 100% / 1px 5px no-repeat;
}

.marks, .marks-r {
    position: absolute;
    display: block;
}

.tiles {
    position: absolute;
    left: 13px;
    top: 1px;
    width: 54px;
    height: 52px;
}

.integra {
    position: absolute;
    left: 2px;
    top: 56px;
    font: bold 15.500px/18px var(--rep);
    letter-spacing: .9px;
    color: #2b2852;
}

.sap-small {
    position: absolute;
    left: 304px;
    top: 23px;
    width: 62px;
    height: 30px;
}

.sap-s { font: italic bold 14px var(--rep); fill: #fff; letter-spacing: -1px; }
.gold { font: bold 5px var(--rep); fill: #fff; text-anchor: end; }

.expertise {
    position: absolute;
    left: 370px;
    top: 19px;
    display: flex;
    flex-direction: column;
    color: #6e6e6e;
    font-family: "Open Sans", sans-serif;
    white-space: nowrap;
}

.exp-l1 {
    font-size: 22px;
    line-height: 23px;
    letter-spacing: .6px;
}

.exp-l1 b {
    font-family: var(--rep);
    letter-spacing: 0;
    color: #5f5f5f;
}

.exp-l1 sup {
    font-size: 10px;
    line-height: 0;
    color: #888;
}

.exp-l2 {
    font-size: 11.500px;
    line-height: 12px;
}

.m-title {
    left: 1px;
    top: 90px;
    width: 3px;
    height: 27px;
}

.f-title {
    left: 1px;
    top: 92px;
    font-size: 19px;
    line-height: 22px;
    font-weight: 700;
    letter-spacing: .33px;
}

.m-title-r {
    left: 717px;
    top: 90px;
    width: 3px;
    height: 29px;
}

.f-fam {
    left: 0;
    top: 0;
    font-size: 16.500px;
    line-height: 20px;
    font-weight: 700;
    letter-spacing: .52px;
}

.m-gray {
    left: 0;
    top: 0;
    width: 720px;
    height: 23px;
}

.f-grp {
    left: 22px;
    top: 6px;
    font-size: 14px;
    line-height: 16px;
    font-weight: 700;
    letter-spacing: .52px;
    color: #1414d4;
    border-bottom: 1px solid #1414d4;
}

.m-grp {
    left: 22px;
    top: 5px;
    width: 533px;
    height: 26px;
}

.f-h-foto, .f-h-c, .f-h-desc, .f-h-prec {
    top: 41px;
    height: 17px;
    font-size: 11px;
    line-height: 17px;
    font-weight: 700;
    letter-spacing: .7px;
}

.f-h-foto { left: 52px; width: 113px; padding-left: 26px; }
.f-h-c { left: 186px; width: 10px; padding-left: 1px; font-weight: 400; }
.f-h-desc { left: 289px; width: 141px; line-height: 20px; }
.f-h-prec { left: 468px; width: 141px; line-height: 19px; }

.sap-big {
    position: absolute;
    left: 52px;
    top: 0;
    width: 113px;
    height: 68px;
}

.sap-b {
    font: bold 60px var(--rep);
    fill: #fff;
    stroke: #fff;
    stroke-width: 2px;
}

.f-d-cod, .f-d-des, .f-d-pre {
    top: 1px;
    height: 14px;
    font-size: 12px;
    line-height: 14px;
    letter-spacing: .25px;
    color: #333;
}

.f-d-cod { left: 183px; width: 62px; overflow: hidden; letter-spacing: .32px; }
.f-d-des { left: 251px; }
.m-d1 { left: 622px; top: 1px; width: 16px; height: 14px; }
.f-d-pre { left: 638px; width: 58px; text-align: right; }

.f-pg2 {
    left: 46px;
    top: 6px;
    width: 139px;
    height: 19px;
    display: flex;
    justify-content: flex-end;
    overflow: hidden;
    font-size: 11px;
    line-height: 17px;
    font-weight: 700;
    letter-spacing: .56px;
    color: #222;
    border-top: 1px solid #222;
    border-bottom: 1px solid #222;
}

.f-pg1 {
    left: 6px;
    top: 0;
    width: 63px;
    height: 15px;
    padding-left: 1px;
    font-size: 11px;
    line-height: 15px;
    font-weight: 700;
    letter-spacing: .56px;
    color: #222;
}

.f-tot, .f-totc {
    top: 0;
    height: 16px;
    font-size: 11.500px;
    line-height: 15px;
    font-weight: 700;
    letter-spacing: .45px;
    color: #222;
    border-bottom: 3px double #222;
}

.f-tot { left: 116px; width: 139px; }
.f-totc { left: 263px; width: 159px; padding-left: 1px; letter-spacing: .6px; }

.m-foot {
    left: 0;
    top: 0;
    width: 712px;
    height: 36px;
}

.f-foot {
    left: 94px;
    top: 7px;
    font-size: 8.500px;
    line-height: 12px;
    font-style: italic;
    letter-spacing: .76px;
    color: #333;
}

.f-page {
    left: 318px;
    top: 23px;
    font-size: 10px;
    line-height: 13px;
    font-weight: 700;
    letter-spacing: .7px;
    color: #222;
}

.m-foot2 {
    left: 703px;
    top: 8px;
    width: 10px;
    height: 28px;
}

.vscroll {
    width: 16px;
    height: 457px;
    margin: 22px 1px 0 auto;
    background-color: #eaf0f8;
}

.vthumb {
    height: 190px;
    background-color: #c7cbd1;
}

.dock {
    flex: 1;
    padding: 5px 0 0 5px;
}

.dock-tab {
    height: 158px;
    display: flex;
    flex-direction: column;
    align-items: center;
    background: linear-gradient(90deg, #fbe3a5, #fcd57f);
    font: 11px var(--rep);
    color: #7a6a45;
}

.dock-ic {
    width: 14px;
    height: 14px;
    margin: 4px 0 5px -2px;
    flex: none;
}

.dock-tab span {
    writing-mode: vertical-rl;
    white-space: nowrap;
    letter-spacing: .25px;
}

/* status + taskbar */
.statusbar {
    height: 24px;
    flex: none;
    display: flex;
    align-items: center;
    font-size: 11px;
    color: #45607f;
    background: linear-gradient(#d8e6f9, #c2daf9 60%, #aecdf6);
    border-top: 1px solid #c6cdd6;
}

.st-help {
    margin-left: 9px;
    width: 515px;
}

.st-rec {
    width: 536px;
}

.st-zoom {
    align-self: stretch;
    flex: 1;
    display: flex;
    align-items: center;
    background: linear-gradient(#c1d8f6, #a8c6ee);
}

.st-btns {
    width: 40px;
    margin-left: 5px;
    height: 16px;
    display: flex;
    justify-content: space-between;
    padding: 1px 3px;
    background-color: #cfe0f6;
    border-radius: 2px;
}

.st-ic {
    width: 14px;
    height: 14px;
}

.st-pct {
    margin-left: 8px;
    width: 41.500px;
    font-size: 11px;
    color: #2c5c9b;
}

.st-round {
    width: 15px;
    height: 15px;
    flex: none;
}

.slider {
    position: relative;
    width: 82px;
    height: 1px;
    margin: 0 6px;
    background-color: #eaf1fa;
}

.slider-thumb {
    position: absolute;
    left: 37px;
    top: -6px;
    width: 10px;
    height: 12px;
}

.taskbar {
    height: 28px;
    flex: none;
    display: flex;
    align-items: center;
    background-color: #040404;
    color: #ddd;
}

.tk {
    width: 17px;
    height: 17px;
}

.tk-p { font: bold 10px var(--rep); fill: #fff; }

.tk-start {
    margin: 0 11px 0 8px;
}

.tk-s {
    width: 34.700px;
    height: 28px;
    flex: none;
    display: flex;
    align-items: center;
    justify-content: center;
}

.tk-run {
    background: linear-gradient(#76b9ed, #76b9ed) center bottom / 25px 2px no-repeat;
}

.tk-act {
    background: linear-gradient(#76b9ed, #76b9ed) center bottom / 100% 2px no-repeat, #333;
}

.tray {
    margin-left: auto;
    display: flex;
    align-items: center;
    font-size: 11.500px;
}

.tr-chev {
    width: 10px;
    height: 8px;
    margin-right: 8px;
}

.tr {
    width: 16px;
    height: 16px;
    margin-right: 5px;
}

.tr-net {
    margin-left: 3px;
    margin-right: 4px;
}

.tr-lang {
    margin-left: 7px;
    width: 30px;
}

.tr-time {
    width: 38px;
    padding-left: 3px;
    font-size: 11.500px;
}

.cursor {
    position: absolute;
    left: 112px;
    top: 159px;
    width: 13px;
    height: 19px;
}
```
